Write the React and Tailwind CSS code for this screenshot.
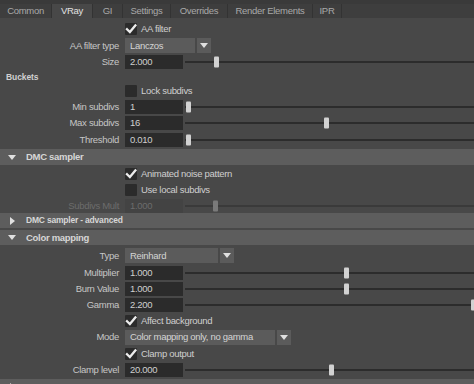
import React from "react";

const Check = () => (
  <svg width="12" height="12" viewBox="0 0 12 12" className="overflow-visible">
    <path d="M2 6.2 L4.9 9.1 L10.4 2.4" fill="none" stroke="#ececec" strokeWidth="2.3" strokeLinecap="square" />
  </svg>
);

const DownTri = () => (
  <svg width="8" height="5" viewBox="0 0 8 5">
    <path d="M0 0 L8 0 L4 5 Z" fill="#e0e0e0" />
  </svg>
);

const RightTri = () => (
  <svg width="5" height="8" viewBox="0 0 5 8">
    <path d="M0 0 L5 4 L0 8 Z" fill="#e0e0e0" />
  </svg>
);

function Label({ children, dim }) {
  return (
    <div className={`w-[119px] shrink-0 text-right whitespace-nowrap ${dim ? "text-[#6c6c6c]" : "text-[#c6c6c6]"}`}>
      {children}
    </div>
  );
}

function Slider({ pos, dim }) {
  return (
    <div className="relative ml-[2px] flex h-full flex-1 items-center">
      <div className={`h-[2px] w-full ${dim ? "bg-[#3a3a3a]" : "bg-[#2c2c2c]"}`} />
      <div
        className={`absolute top-1/2 h-[11px] w-[5px] -translate-y-1/2 rounded-[1px] ${dim ? "bg-[#7a7a7a]" : "bg-[#d2d2d2]"}`}
        style={{ left: pos - 185 }}
      />
    </div>
  );
}

function FieldRow({ label, value, pos, h, dim }) {
  return (
    <div className={`flex items-center ${h}`}>
      <Label dim={dim}>{label}</Label>
      <div
        className={`ml-[6px] flex h-[14px] w-[58px] shrink-0 items-center pl-[5px] ${dim ? "bg-[#434343] text-[#6c6c6c]" : "bg-[#2b2b2b] text-[#cfcfcf]"}`}
      >
        {value}
      </div>
      <Slider pos={pos} dim={dim} />
    </div>
  );
}

function CheckRow({ label, checked, h }) {
  return (
    <div className={`flex items-center ${h}`}>
      <div className="ml-[125px] flex h-[12px] w-[12px] items-center justify-center rounded-[1px] bg-[#2b2b2b]">
        {checked ? <Check /> : null}
      </div>
      <div className="ml-[4px] text-[#cfcfcf]">{label}</div>
    </div>
  );
}

function DropRow({ label, value, mainW, h }) {
  return (
    <div className={`flex items-center ${h}`}>
      <Label>{label}</Label>
      <div className={`ml-[6px] flex h-[15px] items-center bg-[#5b5b5b] pl-[5px] text-[#d4d4d4] ${mainW}`}>{value}</div>
      <div className="ml-[2px] flex h-[15px] w-[14px] items-center justify-center bg-[#5b5b5b]">
        <DownTri />
      </div>
    </div>
  );
}

function Header({ label, open, h, small }) {
  return (
    <div className={`flex items-center bg-[#5d5d5d] ${h}`}>
      <div className="flex w-[26px] shrink-0 items-center pl-[8px]">
        {open ? <DownTri /> : <div className="pl-[2px]"><RightTri /></div>}
      </div>
      <div className={`font-bold text-[#d6d6d6] ${small ? "text-[8.5px] tracking-[-0.2px]" : "text-[9.5px] tracking-[-0.3px]"}`}>{label}</div>
    </div>
  );
}

const tabs = [
  { t: "Common", w: "w-[52px]" },
  { t: "VRay", w: "w-[41px]", active: true },
  { t: "GI", w: "w-[30px]" },
  { t: "Settings", w: "w-[48px]" },
  { t: "Overrides", w: "w-[57px]" },
  { t: "Render Elements", w: "w-[85px]" },
  { t: "IPR", w: "w-[29px]" },
];

export default function App() {
  return (
    <div className="h-[384px] w-[474px] overflow-hidden bg-[#484848] font-['Liberation_Sans',Arial,sans-serif] text-[9.5px] leading-none tracking-[-0.3px]">
      {/* tab bar */}
      <div className="h-[4px] bg-[#3a3a3a]" />
      <div className="flex h-[14px] bg-[#3e3e3e]">
        {tabs.map((tb) => (
          <div
            key={tb.t}
            className={`flex shrink-0 items-center justify-center border-r border-[#333333] ${tb.w} ${tb.active ? "bg-[#484848] text-[#e2e2e2]" : "text-[#a9a9a9]"}`}
          >
            {tb.t}
          </div>
        ))}
      </div>
      <div className="h-[3px]" />

      <CheckRow label="AA filter" checked h="h-[16px]" />
      <DropRow label="AA filter type" value="Lanczos" mainW="w-[70px]" h="h-[17px]" />
      <FieldRow label="Size" value="2.000" pos={214} h="h-[16px]" />
      <div className="flex h-[14px] items-center pl-[6px] text-[8.5px] font-bold tracking-[-0.1px] text-[#d0d0d0]">Buckets</div>
      <CheckRow label="Lock subdivs" h="h-[14px]" />
      <FieldRow label="Min subdivs" value="1" pos={186} h="h-[17px]" />
      <FieldRow label="Max subdivs" value="16" pos={324} h="h-[16px]" />
      <FieldRow label="Threshold" value="0.010" pos={186} h="h-[17px]" />
      <div className="h-[1px]" />
      <Header label="DMC sampler" open h="h-[16px]" />
      <div className="h-[1px]" />
      <CheckRow label="Animated noise pattern" checked h="h-[16px]" />
      <CheckRow label="Use local subdivs" h="h-[16px]" />
      <FieldRow label="Subdivs Mult" value="1.000" pos={213} h="h-[15px]" dim />
      <Header label="DMC sampler - advanced" h="h-[15px]" small />
      <div className="h-[2px]" />
      <Header label="Color mapping" open h="h-[15px]" />
      <div className="h-[2px]" />
      <DropRow label="Type" value="Reinhard" mainW="w-[93px]" h="h-[17px]" />
      <FieldRow label="Multiplier" value="1.000" pos={344} h="h-[17px]" />
      <FieldRow label="Burn Value" value="1.000" pos={344} h="h-[16px]" />
      <FieldRow label="Gamma" value="2.200" pos={471} h="h-[16px]" />
      <CheckRow label="Affect background" checked h="h-[16px]" />
      <DropRow label="Mode" value="Color mapping only, no gamma" mainW="w-[150px]" h="h-[16px]" />
      <CheckRow label="Clamp output" checked h="h-[17px]" />
      <FieldRow label="Clamp level" value="20.000" pos={329} h="h-[16px]" />
      <div className="h-[1px]" />
      <Header label="Camera" h="h-[16px]" />
    </div>
  );
}
